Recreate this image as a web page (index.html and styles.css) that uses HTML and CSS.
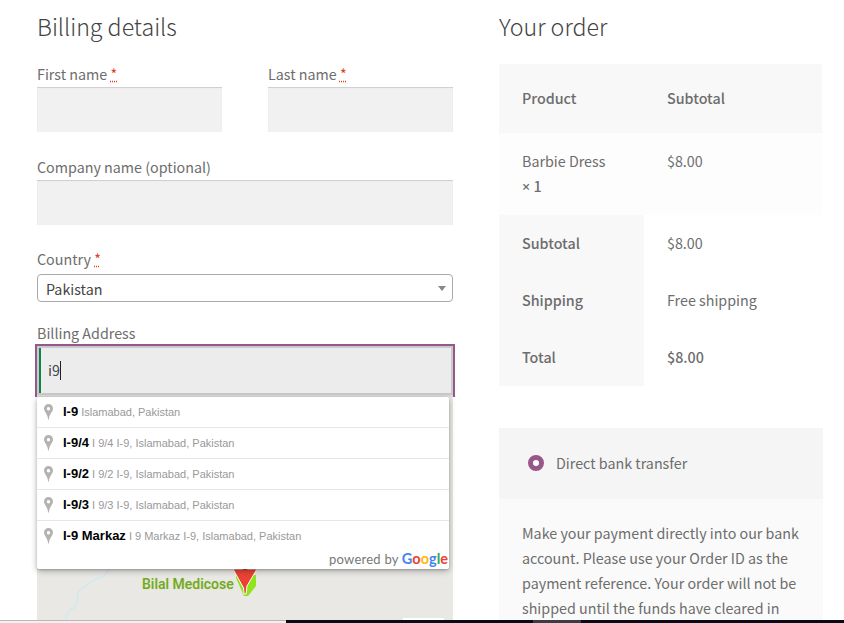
FILE: index.html
```html
<!DOCTYPE html>
<html lang="en">
<head>
<meta charset="utf-8">
<title>Checkout</title>
<link rel="stylesheet" href="styles.css">
</head>
<body>
<main class="checkout">
  <section class="billing">
    <h2 class="title">Billing details</h2>
    <div class="names">
      <div class="field"><label class="label" for="first">First name <abbr class="req">*</abbr></label><input class="input" id="first"></div>
      <div class="field"><label class="label" for="last">Last name <abbr class="req">*</abbr></label><input class="input" id="last"></div>
    </div>
    <div class="field company"><label class="label" for="company">Company name (optional)</label><input class="input" id="company"></div>
    <div class="field country"><span class="label">Country <abbr class="req">*</abbr></span>
      <div class="select"><span>Pakistan</span><svg width="8" height="5" viewBox="0 0 8 5"><path d="M0 0H8L4 5Z" fill="#888"/></svg></div>
    </div>
    <div class="field address"><span class="label">Billing Address</span>
      <div class="address-input"><span>i9</span><i class="caret"></i></div>
      <div class="suggestions">
        <div class="item"><svg class="pin" width="9" height="16" viewBox="0 0 9 16"><path fill-rule="evenodd" d="M4.5 0A4.5 4.6 0 0 0 0 4.6C0 7.8 3.7 10 4.1 15.5H4.9C5.3 10 9 7.8 9 4.6A4.5 4.6 0 0 0 4.5 0ZM4.5 3A1.7 1.7 0 1 1 4.5 6.4A1.7 1.7 0 1 1 4.5 3Z" fill="#b3b3b3"/></svg><b>I-9</b><span>Islamabad, Pakistan</span></div>
        <div class="item"><svg class="pin" width="9" height="16" viewBox="0 0 9 16"><path fill-rule="evenodd" d="M4.5 0A4.5 4.6 0 0 0 0 4.6C0 7.8 3.7 10 4.1 15.5H4.9C5.3 10 9 7.8 9 4.6A4.5 4.6 0 0 0 4.5 0ZM4.5 3A1.7 1.7 0 1 1 4.5 6.4A1.7 1.7 0 1 1 4.5 3Z" fill="#b3b3b3"/></svg><b>I-9/4</b><span>I 9/4 I-9, Islamabad, Pakistan</span></div>
        <div class="item"><svg class="pin" width="9" height="16" viewBox="0 0 9 16"><path fill-rule="evenodd" d="M4.5 0A4.5 4.6 0 0 0 0 4.6C0 7.8 3.7 10 4.1 15.5H4.9C5.3 10 9 7.8 9 4.6A4.5 4.6 0 0 0 4.5 0ZM4.5 3A1.7 1.7 0 1 1 4.5 6.4A1.7 1.7 0 1 1 4.5 3Z" fill="#b3b3b3"/></svg><b>I-9/2</b><span>I 9/2 I-9, Islamabad, Pakistan</span></div>
        <div class="item"><svg class="pin" width="9" height="16" viewBox="0 0 9 16"><path fill-rule="evenodd" d="M4.5 0A4.5 4.6 0 0 0 0 4.6C0 7.8 3.7 10 4.1 15.5H4.9C5.3 10 9 7.8 9 4.6A4.5 4.6 0 0 0 4.5 0ZM4.5 3A1.7 1.7 0 1 1 4.5 6.4A1.7 1.7 0 1 1 4.5 3Z" fill="#b3b3b3"/></svg><b>I-9/3</b><span>I 9/3 I-9, Islamabad, Pakistan</span></div>
        <div class="item"><svg class="pin" width="9" height="16" viewBox="0 0 9 16"><path fill-rule="evenodd" d="M4.5 0A4.5 4.6 0 0 0 0 4.6C0 7.8 3.7 10 4.1 15.5H4.9C5.3 10 9 7.8 9 4.6A4.5 4.6 0 0 0 4.5 0ZM4.5 3A1.7 1.7 0 1 1 4.5 6.4A1.7 1.7 0 1 1 4.5 3Z" fill="#b3b3b3"/></svg><b>I-9 Markaz</b><span>I 9 Markaz I-9, Islamabad, Pakistan</span></div>
        <div class="powered"><span class="by">powered by</span><span class="google"><i class="blue">G</i><i class="red">o</i><i class="yellow">o</i><i class="blue">g</i><i class="green">l</i><i class="red">e</i></span></div>
      </div>
    </div>
    <div class="map">
      <svg class="river" width="80" height="52" viewBox="0 0 80 52"><path d="M67 0L62 7Q48 12 36 23Q36 32 33 38Q20 46 25 52" fill="none" stroke="#c9eaf3" stroke-width="1.2"/></svg>
      <span class="place">Bilal Medicose</span>
      <svg class="marker" width="24" height="30" viewBox="0 0 24 30"><path d="M3 9L11 27H15L23 17V6H3Z" fill="#8fe51c"/><path d="M0 0H24L14 17L13 25H11.2L10.5 19Z" fill="#ea4335" stroke="#fff" stroke-width="1"/><path d="M9 0H15Q12 1.5 9 0Z" fill="#7a1712"/></svg>
      <i class="map-control"></i>
    </div>
  </section>
  <section class="order">
    <h2 class="title">Your order</h2>
    <div class="table">
      <div class="row head"><b>Product</b><b>Subtotal</b></div>
      <div class="row product"><span>Barbie Dress<br><b><span class="times">×</span> 1</b></span><span>$8.00</span></div>
      <div class="row total"><b>Subtotal</b><span>$8.00</span></div>
      <div class="row total"><b>Shipping</b><span>Free shipping</span></div>
      <div class="row total"><b>Total</b><b>$8.00</b></div>
    </div>
    <div class="payment">
      <div class="method"><i class="radio"></i><span>Direct bank transfer</span></div>
      <p class="info">Make your payment directly into our bank<br>account. Please use your Order ID as the<br>payment reference. Your order will not be<br>shipped until the funds have cleared in</p>
    </div>
  </section>
</main>
<footer class="taskbar"><i class="status"></i><i class="tasks"></i></footer>
</body>
</html>
```
FILE: styles.css
```css
* { box-sizing: border-box; }
body {
  margin: 0;
  width: 844px;
  height: 623px;
  overflow: hidden;
  background: #fff;
  color: #6d6d6d;
  font: 14.3px/25px "Noto Sans CJK JP", sans-serif;
}
i { font-style: normal; }
b { font-weight: 500; }
.checkout {
  display: grid;
  grid-template-columns: 416px 324px;
  column-gap: 46px;
  height: 620px;
  padding-left: 37px;
  overflow: hidden;
}
.title {
  margin: 0;
  height: 64px;
  padding-top: 10px;
  color: #444;
  font-size: 23.2px;
  font-weight: 300;
  line-height: 32px;
}
.names { display: grid; grid-template-columns: 185px 185px; column-gap: 46px; height: 93px; }
.label { display: block; height: 25px; line-height: 19px; white-space: nowrap; }
.names .label, .company .label { margin-bottom: -2px; }
.req { color: #e2401c; text-decoration: underline dotted; }
.input {
  display: block;
  width: 100%;
  height: 45px;
  border: 0;
  background: #f1f1f1;
  box-shadow: inset 0 1px 1px rgba(0, 0, 0, .15);
}
.company { height: 92px; }
.country { height: 74px; }
.select {
  display: flex;
  align-items: center;
  justify-content: space-between;
  height: 28px;
  padding: 0 6px 0 8px;
  border: 1px solid #aaa;
  border-radius: 4px;
  color: #444;
}
.address { position: relative; height: 73px; }
.address-input {
  display: flex;
  align-items: center;
  height: 49px;
  margin-top: -2px;
  padding-left: 7px;
  border: 2px solid #cacaca;
  background: linear-gradient(90deg, #0f834d 2px, #ececec 2px);
  box-shadow: 0 0 0 2px #96588a;
  color: #43454b;
}
.address-input span { padding: 0 0 3px 2px; }
.caret { width: 1px; height: 19px; background: #222; }
.suggestions {
  position: absolute;
  z-index: 2;
  top: 74px;
  left: 0;
  width: 412px;
  height: 172px;
  border-radius: 2px;
  background: #fff;
  box-shadow: 0 2px 6px rgba(0, 0, 0, .3), 0 1px 2px rgba(0, 0, 0, .15);
  font-family: "Liberation Sans", sans-serif;
}
.item {
  display: flex;
  align-items: baseline;
  height: 31px;
  border-top: 1px solid #e6e6e6;
  color: #999;
  font-size: 11px;
  line-height: 30px;
  white-space: nowrap;
}
.item:first-child { height: 30px; border-top: 0; }
.item b { margin-right: 3px; color: #000; font-size: 13px; font-weight: 700; }
.pin { align-self: flex-start; margin: 7px 10px 0 7px; }
.powered { display: flex; justify-content: flex-end; align-items: baseline; height: 18px; padding-right: 1px; line-height: 17px; }
.by { margin-right: 3px; color: #777; font: 13px/16px Lato, sans-serif; letter-spacing: .25px; }
.google { display: flex; font: 700 14.5px/16px Lato, sans-serif; }
.blue { color: #4285f4; } .red { color: #ea4335; } .yellow { color: #fbbc05; } .green { color: #34a853; }
.map { position: relative; height: 225px; margin-top: -1px; border-top: 2px solid #dcdcda; background: #e9e8e4; }
.river { position: absolute; left: 5px; top: 172px; }
.place {
  position: absolute;
  left: 105px;
  top: 176px;
  color: #74a626;
  font: 500 14px/22px Roboto, sans-serif;
  text-shadow: 0 0 2px #d3e4b4, 0 0 1px #e6efd6;
}
.marker { position: absolute; left: 196px; top: 172px; }
.map-control { position: absolute; left: 366px; top: 221px; width: 41px; height: 2px; background: #fff; }
.row { display: grid; grid-template-columns: 145px 178px; width: 323px; }
.row > * { padding-left: 23px; }
.head { height: 69px; padding-top: 21px; background: #f8f8f8; }
.product { height: 82px; padding-top: 15px; background: #fdfdfd; }
.times { font: 600 14.3px/20px "Open Sans", sans-serif; }
.total { height: 57px; }
.total > * { padding-top: 15px; }
.total > :first-child { background: #f8f8f8; }
.payment { height: 220px; margin-top: 42px; background: #fafafa; }
.method { display: flex; align-items: center; height: 71px; padding: 0 0 2px 29px; background: #f5f5f5; }
.radio { width: 16px; height: 16px; margin-right: 12px; border: 5px solid #96588a; border-radius: 50%; background: #fff; }
.info { margin: 0; padding: 21px 0 0 23px; white-space: nowrap; }
.taskbar { display: flex; height: 3px; background: #070b15; }
.status { width: 286px; border-top: 1px solid #b8b8b8; background: #f1f1f1; }
.tasks { width: 48px; margin-left: 247px; background: #3b3d45; }
```
